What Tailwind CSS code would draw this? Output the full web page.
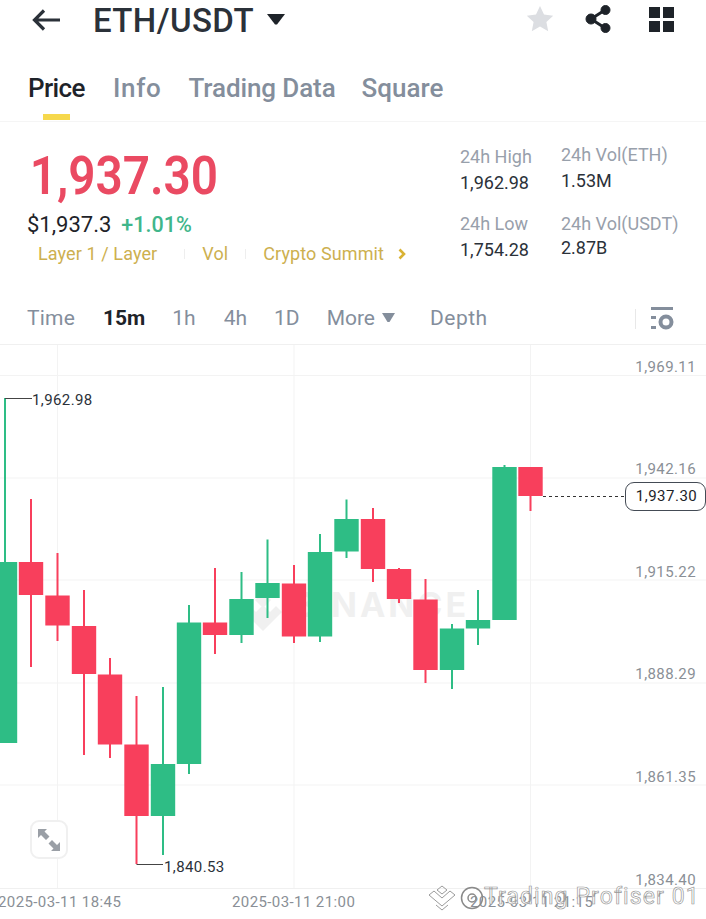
<!DOCTYPE html>
<html lang="en">
<head>
    <meta charset="UTF-8">
    <meta name="viewport" content="width=device-width, initial-scale=1.0">
    <title>ETH/USDT</title>
    <script src="https://cdn.jsdelivr.net/npm/@tailwindcss/browser@4"></script>
</head>
<body class="bg-white font-['Roboto',sans-serif] text-[#1e2329] w-[706px] h-[919px] overflow-hidden">

    <!-- Header -->
    <header class="h-[40px] flex items-center pl-[31px] pr-[32px]">
        <svg class="w-[30px] h-[24px]" viewBox="0 0 30 24" fill="none" stroke="#2b3139" stroke-width="3.2">
            <path d="M29 12H4M13 2.5 3.5 12l9.5 9.5"/>
        </svg>
        <h1 class="ml-[32px] text-[33px] font-medium tracking-[0.4px] leading-none text-[#2b3139]">ETH/USDT</h1>
        <svg class="ml-[13px] mb-[3px] w-[18px] h-[12px]" viewBox="0 0 18 12" fill="#1e2329"><path d="M0 1h18l-8 10.5h-2z"/></svg>
        <div class="ml-auto flex items-center mb-[2px]">
            <svg class="w-[28px] h-[28px]" viewBox="0 0 28 28" fill="#dcdee2"><path d="M14 1l4 8.600 9.200 1.100-6.800 6.300 1.800 9.200-8.200-4.600-8.200 4.600 1.800-9.200L.8 10.700 10 9.600z"/></svg>
            <svg class="ml-[30px] w-[28px] h-[30px]" viewBox="0 0 28 30" fill="#1e2329" stroke="#1e2329">
                <circle cx="21.500" cy="6" r="4.500"/><circle cx="7" cy="15" r="5"/><circle cx="21.500" cy="24" r="4.500"/>
                <path d="M21 6 7 15l14 9" fill="none" stroke-width="3"/>
            </svg>
            <div class="ml-[37px] grid grid-cols-2 gap-[3px]">
                <div class="w-[11px] h-[11px] bg-[#1e2329]"></div><div class="w-[11px] h-[11px] bg-[#1e2329]"></div>
                <div class="w-[11px] h-[11px] bg-[#1e2329]"></div><div class="w-[11px] h-[11px] bg-[#1e2329]"></div>
            </div>
        </div>
    </header>

    <!-- Tabs -->
    <nav class="h-[82px] border-b border-[#f5f5f5] pl-[28px] flex items-start pt-[31px] text-[26px] font-medium leading-[34px] text-[#848e9c]">
        <a class="relative text-[#1e2329] tracking-[-0.6px]">Price
            <span class="absolute left-[15px] top-[43px] w-[27px] h-[6px] bg-[#f6d84c]"></span>
        </a>
        <a class="ml-[28px] tracking-[0.7px]">Info</a>
        <a class="ml-[27px] tracking-[-0.1px]">Trading Data</a>
        <a class="ml-[26px]">Square</a>
    </nav>

    <!-- Price + 24h stats -->
    <section class="h-[174px] flex relative">
        <div class="pl-[28px] pt-[22px] w-[460px]">
            <div class="pl-[2px] text-[53px] font-semibold leading-[64px] origin-left scale-x-[0.9] text-[#ea4a62]">1,937.30</div>
            <div class="flex items-baseline mt-[3px] leading-[28px]">
                <span class="text-[22px] ml-[-1px]">$1,937.3</span>
                <span class="ml-[10px] text-[21.500px] font-medium text-[#3fb68b]">+1.01%</span>
            </div>
            <div class="flex items-center mt-[2px] pl-[10px] text-[18px] tracking-[0.1px] leading-[26px] text-[#cdb04f]">
                <span>Layer 1 / Layer</span>
                <span class="ml-[27px] w-px h-[10px] bg-[#eeeeee]"></span>
                <span class="ml-[17px]">Vol</span>
                <span class="ml-[17px] w-px h-[10px] bg-[#eeeeee]"></span>
                <span class="ml-[17px]">Crypto Summit</span>
                <svg class="ml-[14px] w-[8px] h-[12px]" viewBox="0 0 8 12" fill="none" stroke="#d9b233" stroke-width="2.600"><path d="M1.500 1.500 6 6l-4.500 4.500"/></svg>
            </div>
        </div>
        <div class="w-[101px] pt-[23px] text-[18px] leading-[24px]">
            <div class="text-[#98a0ab]">24h High</div>
            <div class="mt-[2px] text-[#2b3139]">1,962.98</div>
            <div class="mt-[17px] text-[#98a0ab]">24h Low</div>
            <div class="mt-[2px] text-[#2b3139]">1,754.28</div>
        </div>
        <div class="pt-[21px] text-[18px] leading-[24px]">
            <div class="text-[#98a0ab]">24h Vol(ETH)</div>
            <div class="mt-[2px] text-[#2b3139]">1.53M</div>
            <div class="mt-[19px] text-[#98a0ab]">24h Vol(USDT)</div>
            <div class="mt-[0px] text-[#2b3139]">2.87B</div>
        </div>
    </section>

    <!-- Interval toolbar -->
    <div class="h-[49px] flex items-center pl-[27px] pb-[2px] text-[21px] text-[#848e9c] border-b border-[#f0f0f0]">
        <span class="tracking-[0.2px]">Time</span>
        <span class="ml-[28px] font-bold text-[#1e2329]">15m</span>
        <span class="ml-[27px]">1h</span>
        <span class="ml-[28px]">4h</span>
        <span class="ml-[27px]">1D</span>
        <span class="ml-[27px]">More</span>
        <svg class="ml-[7px] mb-[4px] w-[13px] h-[9px]" viewBox="0 0 13 9" fill="#848e9c"><path d="M0 0h13L7.500 9h-2z"/></svg>
        <span class="ml-[35px] tracking-[0.5px]">Depth</span>
        <span class="ml-auto w-px h-[20px] bg-[#e8e8e8]"></span>
        <svg class="ml-[14px] mr-[32px] w-[24px] h-[26px]" viewBox="0 0 24 26" fill="#848e9c">
            <rect x="1" y="1" width="22" height="3"/>
            <rect x="1" y="10" width="5" height="3"/><rect x="1" y="20" width="5" height="3"/>
            <circle cx="16" cy="16" r="5.500" fill="none" stroke="#848e9c" stroke-width="4"/>
        </svg>
    </div>

    <!-- Chart -->
    <div class="relative h-[543px]">
        <svg id="chart" class="absolute left-0 top-0" width="706" height="543" viewBox="0 345 706 543"></svg>

        <div class="absolute right-[10px] top-[13px] text-[15px] leading-[18px] tracking-[0.4px] text-[#8a8f96]">1,969.11</div>
        <div class="absolute right-[10px] top-[115px] text-[15px] leading-[18px] tracking-[0.4px] text-[#8a8f96]">1,942.16</div>
        <div class="absolute right-[10px] top-[218px] text-[15px] leading-[18px] tracking-[0.4px] text-[#8a8f96]">1,915.22</div>
        <div class="absolute right-[10px] top-[320px] text-[15px] leading-[18px] tracking-[0.4px] text-[#8a8f96]">1,888.29</div>
        <div class="absolute right-[10px] top-[423px] text-[15px] leading-[18px] tracking-[0.4px] text-[#8a8f96]">1,861.35</div>
        <div class="absolute right-[10px] top-[526px] text-[15px] leading-[18px] tracking-[0.4px] text-[#8a8f96]">1,834.40</div>

        <div class="absolute left-[32px] top-[46px] text-[15px] leading-[18px] tracking-[0.4px] text-[#2b3139]">1,962.98</div>
        <div class="absolute left-[164px] top-[513px] text-[15px] leading-[18px] tracking-[0.4px] text-[#2b3139]">1,840.53</div>

        <div class="absolute left-[625px] top-[137px] w-[81px] h-[29px] rounded-[9px] border border-[#444b55] bg-white flex items-center justify-center pl-[2px] text-[15px] tracking-[0.5px] text-[#1e2329]">1,937.30</div>

        <button class="absolute left-[30px] top-[475px] w-[38px] h-[39px] rounded-[9px] border-2 border-[#f0f0f0] bg-white flex items-center justify-center">
            <svg class="w-[24px] h-[24px]" viewBox="0 0 24 24" fill="#9a9fa6">
                <path d="M1 1h9L7.500 3.500l5 5-3.500 3.500-5-5L1 10z"/>
                <path d="M23 23h-9l2.500-2.500-5-5 3.500-3.500 5 5L23 14z"/>
            </svg>
        </button>
    </div>

    <!-- Time axis -->
    <div class="relative h-[27px] border-t border-[#f0f0f0] text-[15px] leading-[26px] tracking-[0.4px] text-[#8a8f96]">
        <span class="absolute left-[-2px] top-0 whitespace-nowrap">2025-03-11 18:45</span>
        <span class="absolute left-[232px] top-0 whitespace-nowrap">2025-03-11 21:00</span>
        <span class="absolute left-[470px] top-0 whitespace-nowrap">2025-03-11 21:15</span>
    </div>

    <!-- Repost watermark -->
    <div class="absolute left-[428px] top-[884px] flex items-center text-white">
        <svg class="w-[28px] h-[28px]" viewBox="0 0 28 28" fill="none" stroke="#9b9b9b" stroke-width="1">
            <path d="M14 2l5 4-5 4-5-4zM1 11l5-4 8 7 8-7 5 4-13 11z"/><path d="M8 21l6 5 6-5"/>
        </svg>
        <svg class="ml-[4px] w-[24px] h-[24px]" viewBox="0 0 24 24" fill="none" stroke="#8a8a8a" stroke-width="1.500">
            <circle cx="12" cy="12" r="10.500"/><circle cx="12" cy="12" r="4"/>
        </svg>
        <span class="mb-[2px] text-[23px] leading-[22px] tracking-[1.1px] whitespace-nowrap [-webkit-text-stroke:0.7px_#999999]">Trading Profiser 01</span>
    </div>

    <script>
        const RED = '#f83f5c', GREEN = '#2ebd85';
        // [center x, body top, body bottom, wick top, wick bottom, colour]
        const candles = [
            [5, 562, 743, 398, 743, GREEN],
            [31, 562, 595, 499, 667, RED],
            [57.5, 595.5, 625.5, 553, 641, RED],
            [84, 626, 674, 590, 755, RED],
            [110, 674.5, 744.5, 658, 758, RED],
            [136.5, 744.5, 816, 696, 864, RED],
            [163, 764, 816, 687, 855, GREEN],
            [189, 622.5, 764, 605, 774, GREEN],
            [215, 622.5, 635, 568, 654, RED],
            [241.5, 599, 635, 572, 643, GREEN],
            [267.5, 583, 598, 539.5, 618, GREEN],
            [294, 583.5, 636.5, 565, 643, RED],
            [320, 552, 636.5, 534, 642, GREEN],
            [346.5, 519, 551.5, 499.5, 558, GREEN],
            [373, 519, 569, 508, 582, RED],
            [399, 569, 599, 568, 603, RED],
            [425.5, 599.5, 670, 579, 683, RED],
            [452, 628.5, 670, 624, 689, GREEN],
            [478, 620, 628.5, 590, 645, GREEN],
            [504.5, 467, 620, 465, 620, GREEN],
            [530.5, 467, 496, 467, 511, RED],
        ];

        let svg = '';
        // grid
        [375.5, 478, 580, 683, 785].forEach(y => {
            svg += `<line x1="0" x2="706" y1="${y}" y2="${y}" stroke="#f3f3f3"/>`;
        });
        [57.5, 294, 530.5].forEach(x => {
            svg += `<line x1="${x}" x2="${x}" y1="345" y2="888" stroke="#f3f3f3"/>`;
        });
        // faint exchange mark behind the candles
        svg += `<path d="M263 592l8 8-8 8-8-8zM250 606l6 6 7-7 7 7 6-6 6 6-19 19-19-19z" fill="#f0f0f0"/>`;
        svg += `<text x="293" y="617" font-family="Inter" font-weight="700" font-size="34" letter-spacing="3" fill="#f0f0f0">BINANCE</text>`;
        // candles
        candles.forEach(([x, top, bottom, high, low, color]) => {
            svg += `<rect x="${x - 1}" y="${high}" width="2" height="${low - high}" fill="${color}"/>`;
            svg += `<rect x="${x - 12.2}" y="${top}" width="24.4" height="${bottom - top}" fill="${color}"/>`;
        });
        // high / low leaders and last price line
        svg += `<path d="M5 398.500H32M136.500 864.500H163" stroke="#444" fill="none"/>`;
        svg += `<line x1="543" x2="625" y1="496.500" y2="496.500" stroke="#333" stroke-dasharray="3 3"/>`;
        document.getElementById('chart').innerHTML = svg;
    </script>
</body>
</html>
